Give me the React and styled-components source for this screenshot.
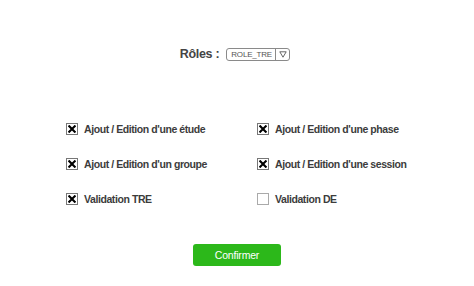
import React from 'react';
import styled, { createGlobalStyle } from 'styled-components';

const GlobalStyle = createGlobalStyle`
	html, body {
		margin: 0;
		padding: 0;
		background: #ffffff;
	}
	body {
		font-family: "Liberation Sans", Arial, sans-serif;
	}
`;

const Page = styled.div`
	width: 474px;
	height: 286px;
	display: flex;
	flex-direction: column;
	background: #ffffff;
`;

const RolesRow = styled.div`
	display: flex;
	align-items: center;
	justify-content: center;
	gap: 7px;
	margin-top: 47px;
	padding-right: 4px;
`;

const RolesLabel = styled.span`
	font-size: 12.5px;
	font-weight: bold;
	letter-spacing: -0.3px;
	color: #444;
`;

const Select = styled.div`
	display: flex;
	align-items: stretch;
	width: 62px;
	height: 11px;
	border: 1px solid #8a8a8a;
	border-radius: 3px;
	background: #fff;
`;

const SelectValue = styled.span`
	flex: 1;
	font-size: 8px;
	letter-spacing: -0.2px;
	color: #555;
	line-height: 11px;
	padding-left: 4px;
`;

const SelectArrow = styled.span`
	width: 13px;
	border-left: 1px solid #8a8a8a;
	display: flex;
	align-items: center;
	justify-content: center;
`;

const Grid = styled.div`
	display: grid;
	grid-template-columns: 191px 191px;
	row-gap: 23px;
	padding-left: 66px;
	margin-top: 62px;
`;

const Item = styled.label`
	display: flex;
	align-items: center;
	gap: 6px;
	height: 12px;
	font-size: 10.5px;
	font-weight: bold;
	letter-spacing: -0.42px;
	color: #3c3c3c;
	white-space: nowrap;
`;

const Box = styled.span`
	width: 10px;
	height: 10px;
	border: 1px solid ${p => (p.checked ? '#777' : '#aaa')};
	background: #fff;
	display: flex;
	align-items: center;
	justify-content: center;
	flex-shrink: 0;
`;

const Footer = styled.div`
	display: flex;
	justify-content: center;
	margin-top: 39px;
`;

const Button = styled.button`
	width: 88px;
	height: 22px;
	border: none;
	border-radius: 3px;
	background: #2cb81a;
	color: #fff;
	font-family: "Liberation Sans", Arial, sans-serif;
	font-size: 10.5px;
	letter-spacing: -0.2px;
	padding: 0;
`;

const Cross = () => (
	<svg width="8" height="8" viewBox="0 0 8 8">
		<path d="M1.3 1.3 L6.7 6.7 M6.7 1.3 L1.3 6.7" stroke="#000" strokeWidth="2.1" strokeLinecap="square" />
	</svg>
);

const items = [
	{ label: "Ajout / Edition d'une étude", checked: true },
	{ label: "Ajout / Edition d'une phase", checked: true },
	{ label: "Ajout / Edition d'un groupe", checked: true },
	{ label: "Ajout / Edition d'une session", checked: true },
	{ label: 'Validation TRE', checked: true },
	{ label: 'Validation DE', checked: false },
];

function App() {
	return (
		<Page>
			<GlobalStyle />
			<RolesRow>
				<RolesLabel>Rôles :</RolesLabel>
				<Select>
					<SelectValue>ROLE_TRE</SelectValue>
					<SelectArrow>
						<svg width="8" height="7" viewBox="0 0 8 7">
							<path d="M0.8 0.8 L7.2 0.8 L4 6.2 Z" fill="none" stroke="#555" strokeWidth="0.9" />
						</svg>
					</SelectArrow>
				</Select>
			</RolesRow>
			<Grid>
				{items.map(it => (
					<Item key={it.label}>
						<Box checked={it.checked}>{it.checked && <Cross />}</Box>
						{it.label}
					</Item>
				))}
			</Grid>
			<Footer>
				<Button>Confirmer</Button>
			</Footer>
		</Page>
	);
}

export default App;
